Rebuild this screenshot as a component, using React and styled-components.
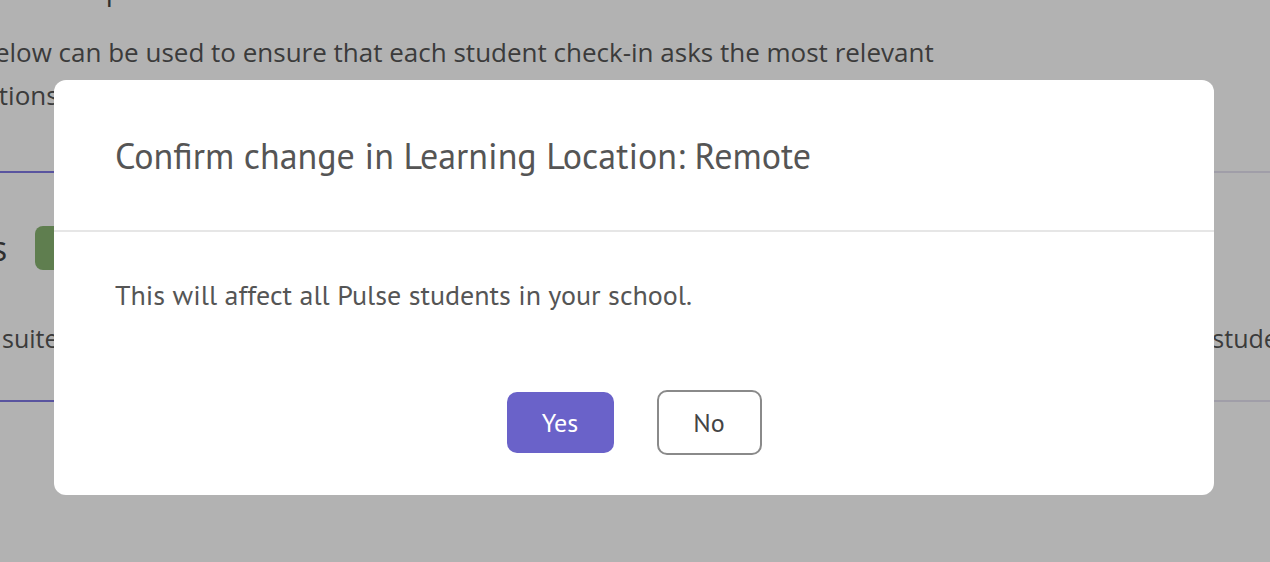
import React from 'react';
import styled, { createGlobalStyle } from 'styled-components';

const Global = createGlobalStyle`
    html, body {
        margin: 0;
        padding: 0;
        background: #ffffff;
        overflow: hidden;
    }
    body {
        font-family: 'Open Sans', 'Noto Sans', sans-serif;
        color: #555555;
    }
`;

const Page = styled.div`
    width: 1270px;
    height: 562px;
    overflow: hidden;
    background: #ffffff;
`;

const Intro = styled.div`
    padding-top: 9px;
`;

const IntroTitle = styled.h1`
    margin: -34px 0 28px 84px;
    font-size: 28px;
    font-weight: 400;
    line-height: 28px;
    color: #444444;
    white-space: nowrap;
`;

const IntroLine = styled.p`
    margin: 0;
    margin-left: ${(p) => p.$shift}px;
    font-size: 26px;
    line-height: 43px;
    color: #555555;
    white-space: nowrap;
`;

const Section = styled.div`
    margin-top: 54px;
    height: 227px;
    border-top: 2px solid #e6e3f1;
    border-bottom: 2px solid #e6e3f1;
    position: relative;

    &::before,
    &::after {
        content: '';
        position: absolute;
        left: 0;
        width: 54px;
        height: 2px;
        background: #8079e4;
    }
    &::before { top: -2px; }
    &::after { bottom: -2px; }
`;

const SectionHead = styled.div`
    display: flex;
    align-items: center;
    gap: 28px;
    margin-left: -9px;
    padding-top: 52px;

    h2 {
        margin: 0;
        font-size: 34px;
        font-weight: 400;
        color: #444444;
    }
`;

const Badge = styled.span`
    display: inline-block;
    width: 80px;
    height: 44px;
    border-radius: 8px;
    background: #88b571;
`;

const SectionText = styled.div`
    display: flex;
    justify-content: space-between;
    margin-top: 50px;
    font-size: 25px;
    color: #555555;
    white-space: nowrap;

    span:first-child { margin-left: 2px; }
    span:last-child { margin-right: -44px; }
`;

const Overlay = styled.div`
    position: fixed;
    inset: 0;
    background: rgba(0, 0, 0, 0.3);
`;

const Modal = styled.div`
    position: fixed;
    left: 54px;
    top: 80px;
    width: 1160px;
    height: 415px;
    background: #ffffff;
    border-radius: 12px;
    display: flex;
    flex-direction: column;
    font-family: 'PT Sans', 'Lato', 'Noto Sans', sans-serif;
`;

const Header = styled.div`
    height: 150px;
    border-bottom: 2px solid #e6e6e6;
    display: flex;
    align-items: center;
    padding: 0 61px;

    h3 {
        margin: 0;
        font-size: 36px;
        font-weight: 400;
        color: #555555;
    }
`;

const Body = styled.div`
    padding: 45px 61px 0;
    font-size: 28px;
    line-height: 36px;
    color: #555555;
`;

const Actions = styled.div`
    display: flex;
    justify-content: center;
    align-items: center;
    gap: 43px;
    margin-top: 77px;
`;

const Button = styled.button`
    font-family: inherit;
    font-size: 26px;
    border-radius: 10px;
    cursor: pointer;
    display: flex;
    align-items: center;
    justify-content: center;
    padding: 0;
    width: ${(p) => (p.$primary ? '107px' : '105px')};
    height: ${(p) => (p.$primary ? '61px' : '65px')};
    background: ${(p) => (p.$primary ? '#6a62c9' : '#ffffff')};
    color: ${(p) => (p.$primary ? '#ffffff' : '#444444')};
    border: ${(p) => (p.$primary ? 'none' : '2px solid #8a8a8a')};
`;

export default function App() {
    return (
        <Page>
            <Global />
            <Intro>
                <IntroTitle>Options</IntroTitle>
                <IntroLine $shift={-21}>below can be used to ensure that each student check-in asks the most relevant</IntroLine>
                <IntroLine $shift={-60}>questions.</IntroLine>
            </Intro>
            <Section>
                <SectionHead>
                    <h2>s</h2>
                    <Badge />
                </SectionHead>
                <SectionText>
                    <span>suited for the students in your school. All students</span>
                    <span>students</span>
                </SectionText>
            </Section>
            <Overlay />
            <Modal role="dialog">
                <Header>
                    <h3>Confirm change in Learning Location: Remote</h3>
                </Header>
                <Body>This will affect all Pulse students in your school.</Body>
                <Actions>
                    <Button $primary>Yes</Button>
                    <Button>No</Button>
                </Actions>
            </Modal>
        </Page>
    );
}
